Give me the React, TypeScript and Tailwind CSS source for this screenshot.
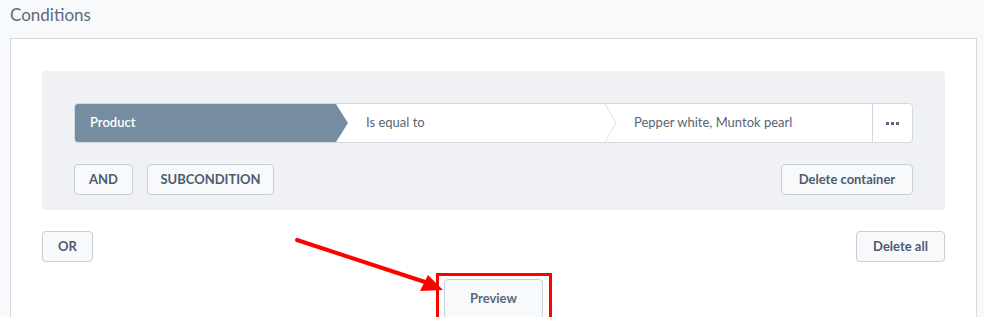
import React from "react";

const font = { fontFamily: "Lato, 'Noto Sans', sans-serif" };

function Btn({ label, className = "" }: { label: string; className?: string }) {
  return (
    <button
      className={
        "h-[31px] rounded-[4px] border border-[#c6cfd9] bg-[#f8f9fb] text-[13px] font-bold text-[#4d5c70] " +
        className
      }
    >
      {label}
    </button>
  );
}

function ConditionRow() {
  return (
    <div className="flex h-[40px] rounded-[4px] border border-[#d3d9e1] bg-white text-[13px] text-[#5b6472]">
      <div
        className="flex w-[273px] items-center rounded-l-[3px] bg-[#768ca1] pl-[15px] font-semibold text-white"
        style={{ clipPath: "polygon(0 0, calc(100% - 12px) 0, 100% 50%, calc(100% - 12px) 100%, 0 100%)" }}
      >
        Product
      </div>
      <div className="relative flex w-[269px] items-center pl-[18px]">
        Is equal to
        <svg className="absolute right-0 top-0 h-full w-[13px]" viewBox="0 0 13 38" preserveAspectRatio="none">
          <polyline points="1,0 12,19 1,38" fill="none" stroke="#dde2e8" strokeWidth="1" />
        </svg>
      </div>
      <div className="flex flex-1 items-center pl-[17px]">Pepper white, Muntok pearl</div>
      <div className="flex w-[40px] items-center justify-center gap-[2px] border-l border-[#d3d9e1]">
        <span className="h-[3px] w-[3px] bg-[#5a6a80]" />
        <span className="h-[3px] w-[3px] bg-[#5a6a80]" />
        <span className="h-[3px] w-[3px] bg-[#5a6a80]" />
      </div>
    </div>
  );
}

export default function App() {
  return (
    <div className="relative h-[317px] w-[984px] overflow-hidden bg-[#f8f9fb]" style={font}>
      <h2 className="pl-[10px] pt-[3px] text-[17px] leading-[24px] text-[#5d6b7e]">Conditions</h2>
      <div className="ml-[10px] mt-[11px] w-[967px] border border-[#d3d9e1] bg-white px-[31px] pt-[32px] pb-10">
        <div className="rounded-[4px] bg-[#eff1f5] px-[32px] pt-[32px] pb-[15px]">
          <ConditionRow />
          <div className="mt-[21px] flex items-center">
            <Btn label="AND" className="w-[59px]" />
            <Btn label="SUBCONDITION" className="ml-[14px] w-[127px]" />
            <Btn label="Delete container" className="ml-auto w-[132px]" />
          </div>
        </div>
        <div className="mt-[21px] flex items-center justify-between">
          <Btn label="OR" className="w-[51px]" />
          <Btn label="Delete all" className="w-[89px]" />
        </div>
        <div className="mt-[17px] flex justify-center">
          <div className="relative">
            <button className="h-[40px] w-[99px] rounded-[4px] border border-[#c6cfd9] bg-[#f8f9fb] text-[13px] font-bold text-[#5a6a80]">
              Preview
            </button>
            <div className="absolute -left-[8px] -right-[9px] -top-[6px] -bottom-[6px] border-[3px] border-[#ff0000]" />
          </div>
        </div>
      </div>
      <svg className="pointer-events-none absolute left-0 top-0" width="984" height="317">
        <line x1="297" y1="240" x2="428" y2="283" stroke="#ff0000" strokeWidth="4" strokeLinecap="round" />
        <polygon points="443,290 420,291 428,275" fill="#ff0000" />
      </svg>
    </div>
  );
}
